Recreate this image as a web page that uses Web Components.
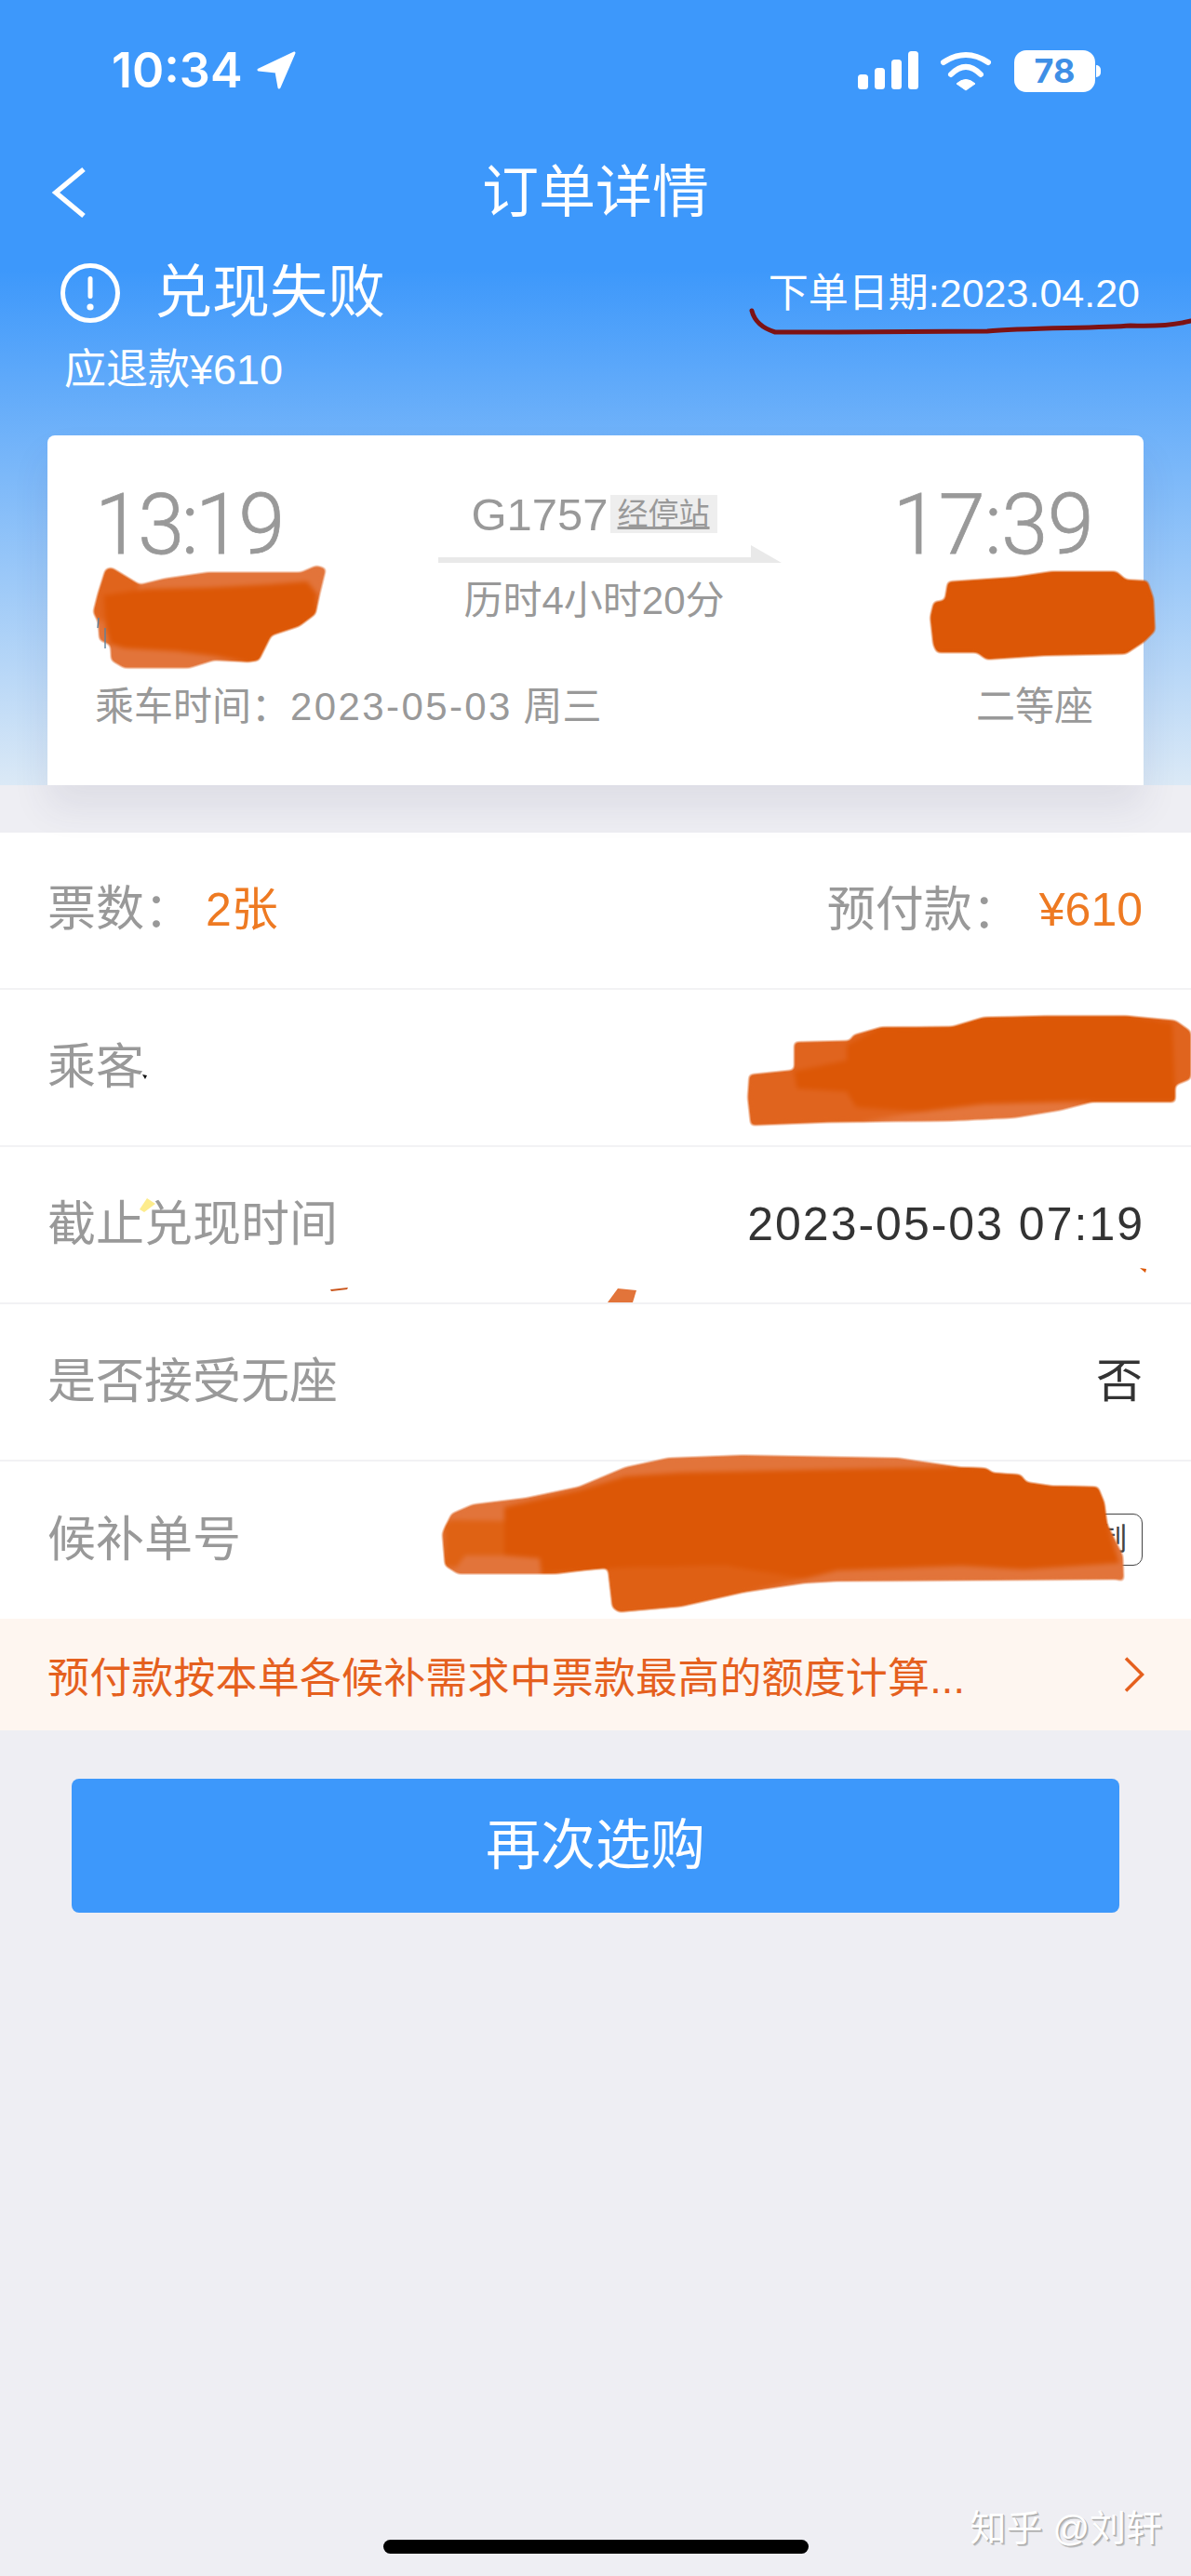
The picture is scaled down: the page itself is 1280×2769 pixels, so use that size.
<!DOCTYPE html>
<html lang="zh-CN">
<head>
<meta charset="utf-8">
<title>订单详情</title>
<style>
  :root {
    --sans: "Liberation Sans", "Noto Sans CJK SC", sans-serif;
    --blue: #3d98fb;
    --grey: #999999;
    --dark: #333333;
    --orange: #ee7a22;
  }
  html, body { margin: 0; padding: 0; background: #eeeef3; }
</style>
</head>
<body>
<order-page>
  <order-header>
    <status-bar></status-bar>
    <nav-bar>订单详情</nav-bar>
    <order-result date="下单日期:2023.04.20" refund="应退款¥610">兑现失败</order-result>
    <trip-card></trip-card>
  </order-header>

  <info-list>
    <info-row>
      <span slot="label">票数<i>：</i></span>
      <span slot="label" class="hot">2张</span>
      <span slot="value" class="soft">预付款<i>：</i></span>
      <span slot="value" class="hot">¥610</span>
    </info-row>
    <info-row><span slot="label">乘客</span></info-row>
    <info-row>
      <span slot="label">截止兑现时间</span>
      <span slot="value" class="num">2023-05-03 07:19</span>
    </info-row>
    <info-row>
      <span slot="label">是否接受无座</span>
      <span slot="value" class="plain">否</span>
    </info-row>
    <info-row last>
      <span slot="label">候补单号</span>
      <copy-button slot="value">复制</copy-button>
    </info-row>
  </info-list>

  <notice-bar>预付款按本单各候补需求中票款最高的额度计算...</notice-bar>
  <action-button>再次选购</action-button>
  <page-foot>知乎 @刘轩</page-foot>
  <paint-marks></paint-marks>
</order-page>

<style>
  info-row span.hot { color: var(--orange); font-size: 50px; }
  info-row span.soft { color: var(--grey); }
  info-row span.plain { font-size: 50px; }
  info-row span.num { font-size: 50px; letter-spacing: 2px; margin-right: -2px; }
  info-row span i { font-style: normal; line-height: 0; vertical-align: -.03em; }
  info-row span[slot="label"].hot { margin-left: 14px; }
</style>

<script>
class OrderPage extends HTMLElement {
  connectedCallback() {
    this.attachShadow({ mode: "open" });
    this.shadowRoot.innerHTML = `
      <style>
        :host {
          display: flex;
          flex-direction: column;
          position: relative;
          width: 1280px;
          height: 2769px;
          overflow: hidden;
          background: #eeeef3;
          font-family: var(--sans);
        }
      </style>
      <slot></slot>
    `;
  }
}

class OrderHeader extends HTMLElement {
  connectedCallback() {
    this.attachShadow({ mode: "open" });
    this.shadowRoot.innerHTML = `
      <style>
        :host {
          display: block;
          position: relative;
          z-index: 1;
          height: 844px;
          color: #fff;
          background: linear-gradient(180deg, var(--blue) 0, var(--blue) 290px, #dbe9f6 844px);
        }
      </style>
      <slot></slot>
    `;
  }
}

class StatusBar extends HTMLElement {
  connectedCallback() {
    this.attachShadow({ mode: "open" });
    this.shadowRoot.innerHTML = `
      <style>
        :host {
          display: flex;
          align-items: center;
          justify-content: space-between;
          height: 152px;
          padding: 0 97px 0 120px;
          font-family: Inter, var(--sans);
        }
        .left, .right { display: flex; align-items: center; }
        .left { gap: 15px; }
        .right { gap: 20px; }
        .time { font-size: 52px; font-weight: 600; line-height: 52px; }
        svg { display: block; }
        .battery { display: flex; align-items: center; gap: 1px; }
        .cell {
          width: 87px;
          height: 45px;
          border-radius: 13px;
          background: #fff;
          color: #3f8fe6;
          font-size: 36px;
          font-weight: 700;
          line-height: 45px;
          text-align: center;
        }
        .nub { width: 5px; height: 13px; border-radius: 0 6px 6px 0; background: #fff; }
      </style>
      <div class="left">
        <span class="time">10:34</span>
        <svg width="42" height="42" viewBox="0 0 42 42"><path d="M40 2 L2 20 L21 22 L24 39 Z" fill="#fff" stroke="#fff" stroke-width="3" stroke-linejoin="round"/></svg>
      </div>
      <div class="right">
        <svg width="66" height="42" viewBox="0 0 66 42" fill="#fff">
          <rect x="0" y="25" width="11" height="16" rx="3.5"/>
          <rect x="18" y="18" width="11" height="23" rx="3.5"/>
          <rect x="36" y="9" width="11" height="32" rx="3.5"/>
          <rect x="54" y="0" width="11" height="41" rx="3.5"/>
        </svg>
        <svg width="62" height="48" viewBox="0 0 62 48">
          <path d="M6 15 Q30 -1 54 15" fill="none" stroke="#fff" stroke-width="6" stroke-linecap="round"/>
          <path d="M14 28 Q30 12 46 28" fill="none" stroke="#fff" stroke-width="6" stroke-linecap="round"/>
          <path d="M20 38 Q30 29 40 38 L30 45 Z" fill="#fff" stroke="#fff" stroke-width="1" stroke-linejoin="round"/>
        </svg>
        <div class="battery"><div class="cell">78</div><div class="nub"></div></div>
      </div>
    `;
  }
}

class NavBar extends HTMLElement {
  connectedCallback() {
    this.attachShadow({ mode: "open" });
    this.shadowRoot.innerHTML = `
      <style>
        :host {
          display: grid;
          grid-template-columns: 1fr auto 1fr;
          align-items: center;
          height: 110px;
        }
        svg { display: block; margin-left: 55px; }
        .title { font-size: 61px; line-height: 110px; }
      </style>
      <svg width="40" height="56" viewBox="0 0 40 56"><path d="M35 3 L5 28 L35 53" fill="none" stroke="#fff" stroke-width="5.5"/></svg>
      <div class="title"><slot></slot></div>
      <div></div>
    `;
  }
}

class OrderResult extends HTMLElement {
  connectedCallback() {
    this.attachShadow({ mode: "open" });
    this.shadowRoot.innerHTML = `
      <style>
        :host { display: block; padding: 18px 55px 0 65px; }
        .top { display: flex; align-items: center; justify-content: space-between; height: 70px; }
        .state { display: flex; align-items: center; gap: 37px; font-size: 62px; line-height: 70px; }
        svg { display: block; }
        .date { font-size: 43px; line-height: 70px; }
        .refund { margin: 18px 0 0 4px; font-size: 45px; line-height: 60px; }
      </style>
      <div class="top">
        <div class="state">
          <svg width="64" height="64" viewBox="0 0 64 64">
            <circle cx="32" cy="32" r="29.5" fill="none" stroke="#fff" stroke-width="5"/>
            <rect x="29.5" y="14" width="5" height="24" rx="2.5" fill="#fff"/>
            <circle cx="32" cy="47" r="3.6" fill="#fff"/>
          </svg>
          <span><slot></slot></span>
        </div>
        <div class="date">${this.getAttribute("date")}</div>
      </div>
      <div class="refund">${this.getAttribute("refund")}</div>
    `;
  }
}

class TripCard extends HTMLElement {
  connectedCallback() {
    this.attachShadow({ mode: "open" });
    this.shadowRoot.innerHTML = `
      <style>
        :host {
          display: block;
          box-sizing: border-box;
          width: 1178px;
          height: 376px;
          margin: 40px 0 0 51px;
          padding: 44px 54px 0 51px;
          border-radius: 8px 8px 0 0;
          background: #fff;
          color: var(--grey);
          box-shadow: 0 24px 40px rgba(50, 60, 100, .09);
        }
        .trip { display: grid; grid-template-columns: 1fr 402px 1fr; height: 159px; }
        .time {
          font-family: Roboto, var(--sans);
          font-size: 90px;
          font-weight: 300;
          -webkit-text-stroke: .8px var(--grey);
          letter-spacing: -3.6px;
          line-height: 105px;
        }
        .time.end { letter-spacing: -.6px; text-align: right; }
        .mid { display: flex; flex-direction: column; align-items: center; padding-top: 20px; }
        .train { display: flex; align-items: center; height: 41px; font-size: 49px; }
        .train b {
          margin-left: 2px;
          padding: 0 8px;
          background: #eeeeee;
          font-size: 33px;
          font-weight: normal;
          line-height: 41px;
          text-decoration: underline;
        }
        svg { display: block; align-self: flex-end; margin-top: 13px; }
        .long { margin-top: 16px; font-size: 42px; line-height: 50px; }
        .foot {
          display: flex;
          justify-content: space-between;
          margin-top: 64px;
          font-size: 42px;
          line-height: 50px;
        }
        .foot em { font-style: normal; letter-spacing: 2.4px; }
        .foot i { font-style: normal; line-height: 0; vertical-align: -.03em; }
      </style>
      <div class="trip">
        <div class="time">13:19</div>
        <div class="mid">
          <div class="train">G1757<b>经停站</b></div>
          <svg width="369" height="19" viewBox="0 0 369 19"><path d="M0 13 L336 13 L336 0 L369 19 L0 19 Z" fill="#e9e9e9"/></svg>
          <div class="long">历时4小时20分</div>
        </div>
        <div class="time end">17:39</div>
      </div>
      <div class="foot">
        <span>乘车时间<i>：</i><em>2023-05-03</em> 周三</span>
        <span>二等座</span>
      </div>
    `;
  }
}

class InfoList extends HTMLElement {
  connectedCallback() {
    this.attachShadow({ mode: "open" });
    this.shadowRoot.innerHTML = `
      <style>
        :host { display: block; margin-top: 51px; background: #fff; }
      </style>
      <slot></slot>
    `;
  }
}

class InfoRow extends HTMLElement {
  connectedCallback() {
    this.attachShadow({ mode: "open" });
    this.shadowRoot.innerHTML = `
      <style>
        :host {
          display: flex;
          align-items: center;
          justify-content: space-between;
          box-sizing: border-box;
          height: 169px;
          padding: 0 52px 2px 51px;
          border-bottom: 2px solid #f2f2f4;
          font-size: 52px;
          line-height: 60px;
        }
        :host([last]) { border-bottom: 0; }
        .label { color: var(--grey); }
        .value { display: flex; align-items: center; gap: 20px; color: var(--dark); }
      </style>
      <div class="label"><slot name="label"></slot></div>
      <div class="value"><slot name="value"></slot></div>
    `;
  }
}

class CopyButton extends HTMLElement {
  connectedCallback() {
    this.attachShadow({ mode: "open" });
    this.shadowRoot.innerHTML = `
      <style>
        :host {
          display: block;
          box-sizing: border-box;
          height: 56px;
          padding: 0 16px;
          border: 1.5px solid #444;
          border-radius: 10px;
          color: #444;
          font-size: 33px;
          line-height: 53px;
        }
      </style>
      <slot></slot>
    `;
  }
}

class NoticeBar extends HTMLElement {
  connectedCallback() {
    this.attachShadow({ mode: "open" });
    this.shadowRoot.innerHTML = `
      <style>
        :host {
          display: flex;
          align-items: center;
          justify-content: space-between;
          height: 120px;
          padding: 0 50px 0 51px;
          background: #fef6f0;
          color: #e5601e;
          font-size: 45px;
          letter-spacing: .15px;
        }
        svg { display: block; }
      </style>
      <span><slot></slot></span>
      <svg width="22" height="38" viewBox="0 0 22 38"><path d="M2 1.5 L19.5 19 L2 36.5" fill="none" stroke="#e5601e" stroke-width="3.5"/></svg>
    `;
  }
}

class ActionButton extends HTMLElement {
  connectedCallback() {
    this.attachShadow({ mode: "open" });
    this.shadowRoot.innerHTML = `
      <style>
        :host {
          display: block;
          box-sizing: border-box;
          width: 1126px;
          height: 144px;
          margin: 52px 0 0 77px;
          border-radius: 8px;
          background: var(--blue);
          color: #fff;
          font-size: 59px;
          line-height: 144px;
          text-align: center;
        }
      </style>
      <slot></slot>
    `;
  }
}

class PageFoot extends HTMLElement {
  connectedCallback() {
    this.attachShadow({ mode: "open" });
    this.shadowRoot.innerHTML = `
      <style>
        :host {
          display: grid;
          grid-template-columns: 1fr 457px 1fr;
          margin-top: auto;
          padding-bottom: 24px;
        }
        .bar { align-self: end; height: 15px; border-radius: 8px; background: #000; }
        .mark {
          justify-self: end;
          height: 47px;
          margin-right: 31px;
          color: #fff;
          font-size: 39px;
          line-height: 40px;
          white-space: nowrap;
          text-shadow: 1px 1px 0 #a9a9a9, 2px 2px 0 #c4c4c4;
        }
      </style>
      <div></div>
      <div class="bar"></div>
      <div class="mark"><slot></slot></div>
    `;
  }
}

// the hand painted marks sit on top of everything, coordinates are the screenshot's own
class PaintMarks extends HTMLElement {
  connectedCallback() {
    this.attachShadow({ mode: "open" });
    this.shadowRoot.innerHTML = `
      <style>
        :host { position: absolute; top: 0; left: 0; z-index: 2; pointer-events: none; }
        svg { display: block; }
      </style>
      <svg width="1280" height="2769" viewBox="0 0 1280 2769">
        <defs>
          <filter id="soft" filterUnits="userSpaceOnUse" x="0" y="500" width="1280" height="1300" color-interpolation-filters="sRGB">
            <feGaussianBlur stdDeviation="2.6"/>
            <feComponentTransfer><feFuncA type="linear" slope="2.4" intercept="-0.7"/></feComponentTransfer>
          </filter>
        </defs>

        <path d="M808 334 C811 346 820 353 833 357 L900 357 L1061 356 C1100 352 1180 353 1215 350 C1240 351 1260 350 1280 345" fill="none" stroke="#7d1214" stroke-width="5" stroke-linecap="round"/>

        <g filter="url(#soft)">
          <g transform="translate(90 595) scale(.3333)">
            <path d="M70 50 L90 45 L180 100 L260 80 L400 60 L700 60 L750 38 L782 48 L762 130 L748 195 L695 235 L605 265 L565 345 L530 350 L420 345 L340 370 L130 370 L88 345 L85 295 L50 280 L45 220 L30 190 L45 130 Z" fill="#e2743a"/>
            <path d="M70 50 L90 45 L180 100 L170 125 L100 135 L60 225 L30 190 L45 130 Z" fill="#e0641c"/>
            <path d="M65 135 L200 115 L400 110 L600 100 L720 90 L752 130 L748 195 L695 235 L605 265 L565 345 L530 350 L420 330 L300 315 L130 305 L85 290 L70 230 Z" fill="#dc5706"/>
          </g>

          <g transform="translate(990 600) scale(.3333)">
            <path d="M85 75 L300 60 L420 42 L630 42 L660 68 L730 72 L750 130 L755 235 L720 270 L660 310 L400 315 L210 328 L180 305 L50 305 L38 280 L28 190 L40 140 L75 135 Z" fill="#dc5706"/>
          </g>

          <g transform="translate(790 1080) scale(.3333)">
            <path d="M45 225 L190 210 L190 120 L370 115 L380 97 L470 72 L700 70 L800 40 L1000 35 L1260 35 L1420 50 L1470 85 L1470 240 L1420 260 L1420 315 L1150 315 L1050 340 L900 365 L700 375 L300 380 L50 390 L40 300 Z" fill="#e0641e"/>
            <path d="M600 345 L800 320 L1150 312 L1050 340 L900 365 L700 375 L400 378 Z" fill="#e4763c"/>
            <path d="M360 130 L470 72 L700 70 L800 40 L1260 35 L1410 60 L1420 310 L1150 310 L800 320 L600 345 L390 330 L360 280 L200 270 L190 215 L360 180 Z" fill="#dc5706"/>
          </g>

          <path d="M475 1648 L485 1627 L508 1617 L565 1610 L622 1598 L672 1577 L718 1567 L798 1564 L965 1567 L1033 1577 L1060 1578 L1067 1583 L1097 1585 L1103 1593 L1130 1597 L1180 1598 L1187 1615 L1190 1638 L1207 1672 L1208 1700 L1200 1698 L900 1700 L865 1702 L798 1712 L732 1727 L665 1733 L658 1728 L653 1685 L598 1692 L492 1692 L478 1683 Z" fill="#e2743a"/>
          <path d="M478 1640 L485 1634 L545 1635 L545 1672 L500 1672 L490 1685 L478 1683 Z" fill="#df6214"/>
          <path d="M653 1685 L800 1683 L865 1697 L798 1712 L732 1727 L665 1733 L658 1728 Z" fill="#df6014"/>
          <path d="M542 1620 L622 1602 L672 1587 L732 1583 L965 1578 L1033 1577 L1060 1578 L1067 1583 L1097 1585 L1103 1593 L1130 1597 L1180 1598 L1187 1615 L1190 1638 L1203 1680 L1100 1687 L1033 1683 L900 1688 L865 1697 L782 1683 L665 1685 L582 1692 L580 1675 L542 1672 Z" fill="#dc5706"/>
        </g>

        <path d="M106 664 L105 675 M113 675 L113 697" fill="none" stroke="#5d819c" stroke-width="1.4"/>
        <path d="M355 1386 L374 1384 L373 1386 L356 1388 Z" fill="#c9541a"/>
        <path d="M653 1400 L664 1385 L684 1387 L680 1400 Z" fill="#e2743a"/>
        <path d="M1225 1363 L1232 1364 L1231 1368 Z" fill="#dc5706"/>
        <path d="M150 1300 L158 1288 L167 1294 L155 1303 Z" fill="#fdec8c"/>
        <path d="M153 1155 L158 1156 L156 1160 Z" fill="#111"/>
      </svg>
    `;
  }
}

customElements.define("order-page", OrderPage);
customElements.define("order-header", OrderHeader);
customElements.define("status-bar", StatusBar);
customElements.define("nav-bar", NavBar);
customElements.define("order-result", OrderResult);
customElements.define("trip-card", TripCard);
customElements.define("info-list", InfoList);
customElements.define("info-row", InfoRow);
customElements.define("copy-button", CopyButton);
customElements.define("notice-bar", NoticeBar);
customElements.define("action-button", ActionButton);
customElements.define("page-foot", PageFoot);
customElements.define("paint-marks", PaintMarks);
</script>
</body>
</html>
